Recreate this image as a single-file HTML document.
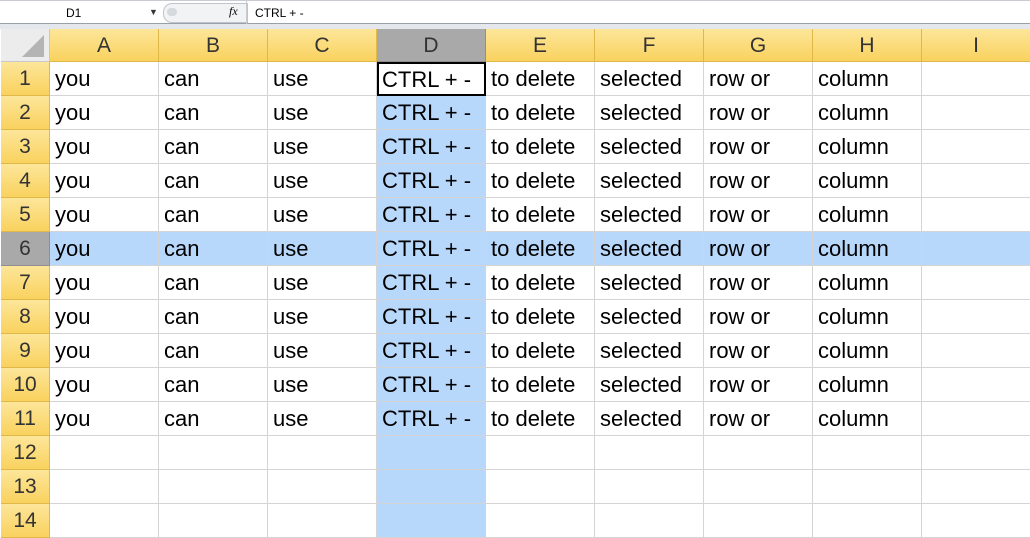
<!DOCTYPE html><html><head><style>
body{margin:0;width:1030px;height:538px;overflow:hidden;background:#fff;font-family:"Liberation Sans",sans-serif;position:relative}
.fb{position:absolute;left:0;top:0;width:1030px;height:24px;background:#fff;border-top:1px solid #c8ccd2;border-bottom:1px solid #9aa0a8;box-sizing:border-box}
.band{position:absolute;left:0;top:24px;width:1030px;height:5px;background:#e4e7eb}
.g{position:absolute;left:1px;top:29px;display:grid;grid-template-columns:49px repeat(9,109px);grid-template-rows:33px repeat(14,34px)}
.g>div{box-sizing:border-box;border-right:1px solid #d4d4d4;border-bottom:1px solid #d4d4d4;font-size:22px;line-height:33px;padding-left:5px;white-space:nowrap;overflow:hidden;color:#000}
.g>.h{background:linear-gradient(#fde69a,#f9d25e);border-color:#e0b84a;color:#333;text-align:center;padding:0;font-size:21px}
.g>.gr{background:#a9a9a9;border-color:#8f8f8f}
.g>.s{background:#b8d8fb}
.g>.c{background:#ececec;border-color:#c8c8c8;position:relative}
.g>.sel{border:2px solid #000;line-height:31px;padding-left:3px}
</style></head><body>
<div class="fb">
<span style="position:absolute;left:66px;top:5px;font-size:12px">D1</span>
<span style="position:absolute;left:149px;top:6px;font-size:9px;color:#333">▼</span>
<div style="position:absolute;left:163px;top:2px;width:83px;height:18px;border:1px solid #c0c4ca;border-radius:9px 0 0 9px;background:#f2f3f5"></div>
<div style="position:absolute;left:167px;top:7px;width:10px;height:8px;border-radius:4px;background:#d6d9dd"></div>
<span style="position:absolute;left:229px;top:3px;font-size:12px;font-style:italic;font-family:'Liberation Serif',serif">fx</span>
<div style="position:absolute;left:246px;top:0;width:1px;height:23px;background:#c8ccd2"></div>
<span style="position:absolute;left:255px;top:5px;font-size:12px">CTRL + -</span>
</div>
<div class="band"></div>
<div class="g" id="g"></div>
<script>
var g=document.getElementById('g'),h='';
h+='<div class="c"><svg width="40" height="28" style="position:absolute;left:5px;top:2px"><polygon points="38,4 38,26 16,26" fill="#b4b4b4"/></svg></div>';
'ABCDEFGHI'.split('').forEach(function(l){h+='<div class="h'+(l=='D'?' gr':'')+'">'+l+'</div>';});
var w=['you','can','use','CTRL + -','to delete','selected','row or','column',''];
for(var r=1;r<=14;r++){
 h+='<div class="h'+(r==6?' gr':'')+'">'+r+'</div>';
 for(var c=0;c<9;c++){
  var cls=[];var t=r<=11?w[c]:'';
  if(r==6||c==3)cls.push('s');
  if(r==1&&c==3){cls=['sel'];}
  h+='<div class="'+cls.join(' ')+'">'+t+'</div>';
 }
}
g.innerHTML=h;
</script>
</body></html>
